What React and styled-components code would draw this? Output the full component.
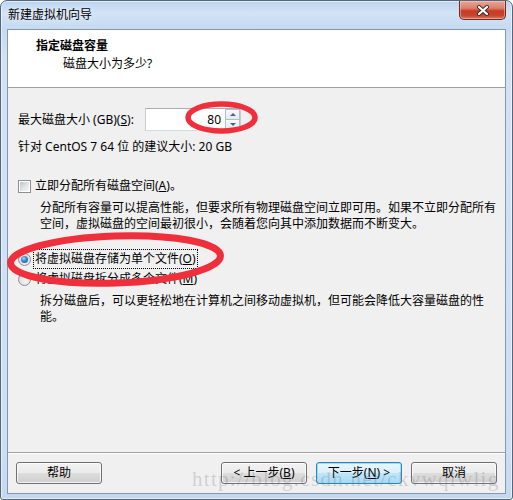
import React from "react";
import styled, { createGlobalStyle } from "styled-components";

const GlobalStyle = createGlobalStyle`
  html, body { margin: 0; padding: 0; background: #ffffff; }
  body {
    font-family: "Noto Sans", "Noto Sans CJK SC", sans-serif;
    font-size: 12px;
    color: #000;
  }
  * { box-sizing: border-box; }
`;

const Page = styled.div`
  position: relative;
  width: 513px;
  height: 500px;
`;

const Window = styled.div`
  width: 513px;
  height: 500px;
  display: flex;
  flex-direction: column;
  border: 1px solid #55667c;
  border-radius: 7px 7px 3px 3px;
  background: linear-gradient(
    180deg,
    #bcd3ee 0px,
    #d2e3f6 12px,
    #c6daf1 27px,
    #d3e3f5 60px,
    #cddff3 440px,
    #c4d9f0 100%
  );
  box-shadow: inset 0 0 0 1px rgba(255, 255, 255, 0.55);
  overflow: hidden;
`;

const TitleBar = styled.div`
  height: 28px;
  flex: none;
  display: flex;
  align-items: center;
  padding-left: 7px;
`;

const TitleText = styled.div`
  line-height: 16px;
  color: #000;
  text-shadow: 0 0 6px rgba(255, 255, 255, 0.9);
`;

const CloseButton = styled.div`
  margin-left: auto;
  margin-right: 6px;
  align-self: flex-start;
  width: 47px;
  height: 19px;
  display: flex;
  align-items: center;
  justify-content: center;
  border: 1px solid #6b2c26;
  border-top: none;
  border-radius: 0 0 5px 5px;
  background: linear-gradient(
    180deg,
    #e9a597 0%,
    #dc7f6c 40%,
    #c63b24 55%,
    #c7452d 80%,
    #d8785f 100%
  );
  box-shadow: inset 0 0 0 1px rgba(255, 220, 210, 0.45);
`;

const Client = styled.div`
  flex: 1;
  margin: 0 6px 5px;
  border: 1px solid #8597b0;
  background: #f0f0f0;
  display: flex;
  flex-direction: column;
  min-height: 0;
`;

const Header = styled.div`
  height: 58px;
  flex: none;
  background: #ffffff;
  border-bottom: 1px solid #a0a0a0;
  padding: 8px 0 0 28px;
`;

const HeaderTitle = styled.div`
  font-weight: 700;
  line-height: 16px;
`;

const HeaderSub = styled.div`
  line-height: 16px;
  margin-top: 2px;
  padding-left: 27px;
`;

const Content = styled.div`
  flex: 1;
  padding: 20px 0 0 10px;
  display: flex;
  flex-direction: column;
  align-items: flex-start;
`;

const FieldRow = styled.div`
  display: flex;
  align-items: center;
  height: 23px;
`;

const FieldLabel = styled.div`
  width: 127px;
  line-height: 16px;
  white-space: nowrap;
`;

const SpinBox = styled.div`
  display: flex;
  width: 96px;
  height: 23px;
  border: 1px solid;
  border-color: #abadb3 #c8ccd4 #d5dbe2 #c8ccd4;
  background: #ffffff;
`;

const SpinValue = styled.div`
  flex: 1;
  text-align: right;
  padding-right: 4px;
  line-height: 21px;
`;

const SpinButtons = styled.div`
  width: 15px;
  display: flex;
  flex-direction: column;
`;

const SpinArrow = styled.div`
  flex: 1;
  display: flex;
  align-items: center;
  justify-content: center;
  border: 1px solid #b4bfcc;
  background: linear-gradient(180deg, #f7f9fb 0%, #e6eaef 100%);
  & + & {
    border-top: none;
  }
  &::before {
    content: "";
    width: 0;
    height: 0;
    border-left: 3px solid transparent;
    border-right: 3px solid transparent;
    ${(p) =>
      p.$down
        ? "border-top: 3px solid #4b6284;"
        : "border-bottom: 3px solid #4b6284;"}
  }
`;

const TextLine = styled.div`
  line-height: 16px;
  margin-top: ${(p) => p.$mt || 0}px;
  white-space: nowrap;
`;

const OptionRow = styled.div`
  display: flex;
  align-items: center;
  gap: 4px;
  height: 16px;
  margin-top: ${(p) => p.$mt || 0}px;
  white-space: nowrap;
`;

const CheckBox = styled.span`
  width: 13px;
  height: 13px;
  flex: none;
  border: 1px solid #8e8f8f;
  background: #ffffff;
  padding: 1px;
  &::before {
    content: "";
    display: block;
    width: 100%;
    height: 100%;
    background: linear-gradient(135deg, #bfc4ca 0%, #e6e8ea 60%, #f6f6f6 100%);
  }
`;

const Radio = styled.span`
  width: 13px;
  height: 13px;
  flex: none;
  border-radius: 50%;
  border: 1px solid #8e8f8f;
  background: radial-gradient(circle at 60% 65%, #f4f4f4 0%, #dadcde 70%, #c9ccd0 100%);
  display: flex;
  align-items: center;
  justify-content: center;
  &::before {
    content: "";
    display: ${(p) => (p.$checked ? "block" : "none")};
    width: 7px;
    height: 7px;
    border-radius: 50%;
    background: radial-gradient(circle at 40% 35%, #a9dcfb 0%, #3b8fcf 40%, #154a7d 100%);
  }
`;

const OptionLabel = styled.span`
  display: inline-block;
  line-height: 16px;
  height: 16px;
  ${(p) => (p.$focused ? "outline: 1px dotted #000; outline-offset: 1px;" : "")}
`;

const Description = styled.div`
  padding-left: 22px;
  margin-top: ${(p) => p.$mt || 0}px;
  line-height: 16px;
  white-space: nowrap;
`;

const Footer = styled.div`
  flex: none;
  display: flex;
  gap: 9px;
  padding: 9px 8px;
  border-top: 1px solid #a0a0a0;
  box-shadow: inset 0 1px 0 #ffffff;
`;

const Button = styled.div`
  width: 86px;
  height: 22px;
  display: flex;
  align-items: center;
  justify-content: center;
  line-height: 16px;
  border-radius: 3px;
  border: 1px solid ${(p) => (p.$default ? "#3c7fb1" : "#707070")};
  background: ${(p) =>
    p.$default
      ? "linear-gradient(180deg, #eaf6fd 0%, #d9f0fc 50%, #bee6fd 51%, #a7d9f5 100%)"
      : "linear-gradient(180deg, #f2f2f2 0%, #ebebeb 50%, #dddddd 51%, #cfcfcf 100%)"};
  box-shadow: inset 0 0 0 1px
    ${(p) => (p.$default ? "#98dff9" : "rgba(255,255,255,0.75)")};
  margin-right: ${(p) => (p.$push ? "auto" : "0")};
  white-space: nowrap;
`;

const Overlay = styled.svg`
  position: absolute;
  left: 0;
  top: 0;
  pointer-events: none;
`;

const Watermark = styled.div`
  position: absolute;
  left: 192px;
  top: 469px;
  font-family: "Liberation Serif", serif;
  font-size: 21px;
  line-height: 21px;
  letter-spacing: 1.3px;
  color: rgba(120, 120, 120, 0.28);
  pointer-events: none;
  white-space: nowrap;
`;

export default function App() {
  return (
    <Page>
      <GlobalStyle />
      <Window>
        <TitleBar>
          <TitleText>新建虚拟机向导</TitleText>
          <CloseButton>
            <svg width="14" height="11" viewBox="0 0 14 11">
              <path d="M3 2 L11 9 M11 2 L3 9" stroke="#3a2a2a" strokeWidth="4" strokeLinecap="round" />
              <path d="M3 2 L11 9 M11 2 L3 9" stroke="#ffffff" strokeWidth="2.2" strokeLinecap="round" />
            </svg>
          </CloseButton>
        </TitleBar>
        <Client>
          <Header>
            <HeaderTitle>指定磁盘容量</HeaderTitle>
            <HeaderSub>磁盘大小为多少?</HeaderSub>
          </Header>
          <Content>
            <FieldRow>
              <FieldLabel>
                最大磁盘大小 (GB)(<u>S</u>):
              </FieldLabel>
              <SpinBox>
                <SpinValue>80</SpinValue>
                <SpinButtons>
                  <SpinArrow />
                  <SpinArrow $down />
                </SpinButtons>
              </SpinBox>
            </FieldRow>
            <TextLine $mt={8}>针对 CentOS 7 64 位 的建议大小: 20 GB</TextLine>
            <OptionRow $mt={23}>
              <CheckBox />
              <OptionLabel>
                立即分配所有磁盘空间(<u>A</u>)。
              </OptionLabel>
            </OptionRow>
            <Description $mt={6}>
              分配所有容量可以提高性能，但要求所有物理磁盘空间立即可用。如果不立即分配所有
              <br />
              空间，虚拟磁盘的空间最初很小，会随着您向其中添加数据而不断变大。
            </Description>
            <OptionRow $mt={19}>
              <Radio $checked />
              <OptionLabel $focused>
                将虚拟磁盘存储为单个文件(<u>O</u>)
              </OptionLabel>
            </OptionRow>
            <OptionRow $mt={4}>
              <Radio />
              <OptionLabel>
                将虚拟磁盘拆分成多个文件(<u>M</u>)
              </OptionLabel>
            </OptionRow>
            <Description $mt={6}>
              拆分磁盘后，可以更轻松地在计算机之间移动虚拟机，但可能会降低大容量磁盘的性
              <br />
              能。
            </Description>
          </Content>
          <Footer>
            <Button $push>帮助</Button>
            <Button>
              &lt; 上一步(<u>B</u>)
            </Button>
            <Button $default>
              下一步(<u>N</u>) &gt;
            </Button>
            <Button>取消</Button>
          </Footer>
        </Client>
      </Window>
      <Watermark>http://blog.csdn.net/ckvwqiwlig</Watermark>
      <Overlay width="513" height="500" viewBox="0 0 513 500">
        <ellipse cx="221.5" cy="117.5" rx="33.5" ry="13.5" fill="none" stroke="#ef2f3b" strokeWidth="5.5" />
        <ellipse
          cx="115.5"
          cy="259.5"
          rx="105"
          ry="23.5"
          fill="none"
          stroke="#ef2f3b"
          strokeWidth="7"
          transform="rotate(-2 115.5 259.5)"
        />
      </Overlay>
    </Page>
  );
}
